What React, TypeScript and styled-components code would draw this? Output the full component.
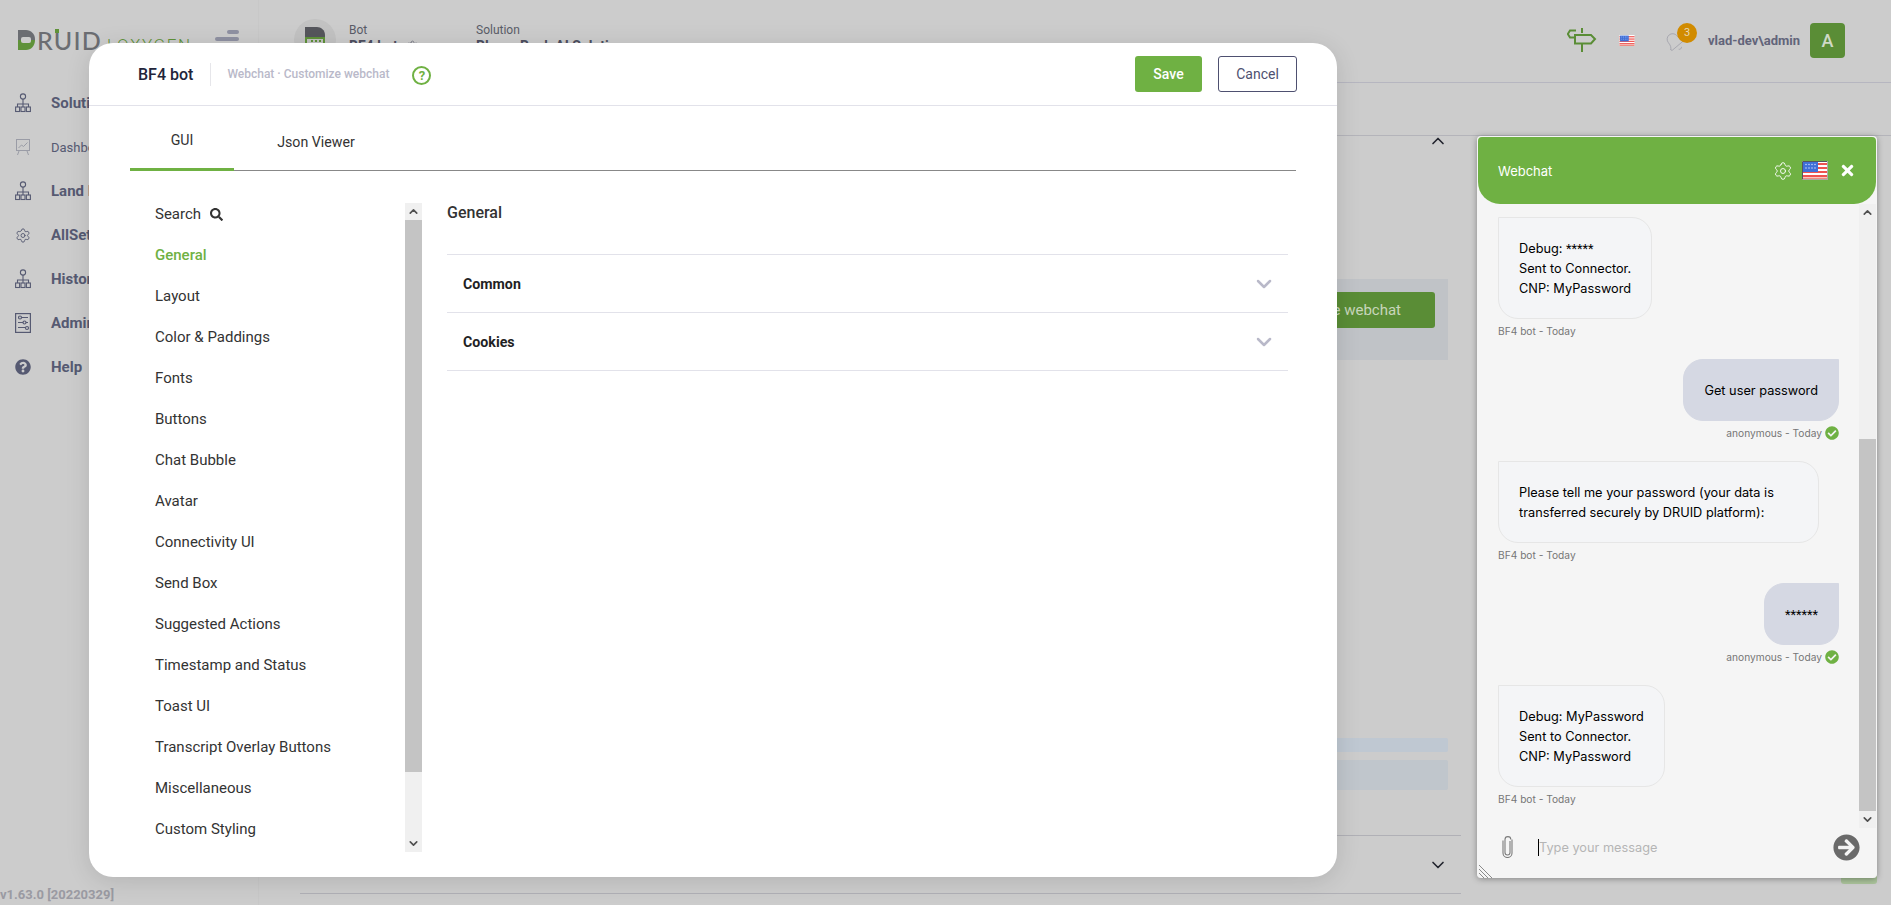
import React from "react";
import styled, { createGlobalStyle } from "styled-components";
import { ChevronDown, ChevronUp, Settings, Bell } from "lucide-react";
import { FaArrowCircleRight, FaCheckCircle, FaQuestionCircle, FaSearch, FaTimes } from "react-icons/fa";

const GlobalStyle = createGlobalStyle`
    html, body {
        margin: 0;
        padding: 0;
        background: #cccccc;
        font-family: Roboto, "Liberation Sans", sans-serif;
    }
`;

const Page = styled.div`
    position: relative;
    width: 1891px;
    height: 905px;
    overflow: hidden;
    display: flex;
    background: #cccccc;
`;

/* ---------- dimmed page behind the modal ---------- */

const Sidebar = styled.aside`
    width: 259px;
    height: 905px;
    flex-shrink: 0;
    display: flex;
    flex-direction: column;
    border-right: 1px solid #c8c8c8;
    box-sizing: border-box;
`;

const LogoRow = styled.div`
    height: 81px;
    flex-shrink: 0;
    display: flex;
    align-items: flex-start;
    padding: 30px 19px 0 18px;
    box-sizing: border-box;

    svg {
        flex-shrink: 0;
    }
`;

const LogoText = styled.span`
    position: relative;
    font-family: Lato, sans-serif;
    font-size: 25px;
    line-height: 20px;
    font-weight: 500;
    letter-spacing: 1.2px;
    margin-left: 1px;
    color: #6b6d72;

    &::before {
        content: "";
        position: absolute;
        left: 18px;
        top: -1px;
        width: 4px;
        height: 4px;
        background: #5f9239;
    }
`;

const LogoSub = styled.span`
    font-family: Roboto, sans-serif;
    font-size: 17px;
    line-height: 20px;
    font-weight: 300;
    letter-spacing: 1.6px;
    color: #5f9239;
    margin: 5px 0 0 5px;
`;

const Burger = styled.div`
    display: flex;
    flex-direction: column;
    align-items: flex-end;
    gap: 3px;
    width: 24px;
    margin-left: auto;

    span {
        display: block;
        height: 4px;
        background: #8f91a2;
        border-radius: 2px;
        width: 100%;
    }
    span:first-child {
        width: 12px;
    }
`;

const NavItem = styled.div`
    height: 44px;
    display: flex;
    align-items: center;
    gap: 20px;
    padding-left: 15px;
    color: #565a72;
    font-size: ${(p: { $sub?: boolean }) => (p.$sub ? "13px" : "15px")};
    font-weight: ${(p: { $sub?: boolean }) => (p.$sub ? 400 : 700)};
    white-space: nowrap;
`;

const NavIcon = styled.span`
    width: 16px;
    height: 20px;
    display: flex;
    align-items: center;
    justify-content: center;
`;

const Version = styled.div`
    margin-top: auto;
    height: 20px;
    line-height: 20px;
    font-size: 13px;
    font-weight: 700;
    color: #9a9aa2;
`;

const Main = styled.div`
    flex: 1;
    min-width: 0;
    display: flex;
    flex-direction: column;
`;

const Header = styled.header`
    height: 83px;
    flex-shrink: 0;
    box-sizing: border-box;
    border-bottom: 1px solid #b6b6c0;
    display: flex;
    align-items: flex-start;
`;

const BotAvatar = styled.div`
    width: 42px;
    height: 42px;
    border-radius: 50%;
    background: #c2c2c2;
    margin: 19px 13px 0 35px;
    display: flex;
    align-items: center;
    justify-content: center;
`;

const HeaderField = styled.div`
    width: ${(p: { $w: number }) => p.$w}px;
    padding-top: 23px;
    font-size: 12px;
    line-height: 14px;
    color: #5a5c68;

    b {
        display: flex;
        align-items: center;
        gap: 8px;
        font-size: 14px;
        line-height: 18px;
        color: #4d4f60;
    }
`;

const HeaderRight = styled.div`
    margin-left: auto;
    display: flex;
    align-items: center;
    height: 80px;
    padding-right: 46px;
`;

const FlagSlot = styled.span`
    display: flex;
    margin: ${(p: { $m: string }) => p.$m};
`;

const BellWrap = styled.div`
    position: relative;
    width: 24px;
    height: 24px;
    margin-left: 40px;
    color: #a8a8b0;

    svg {
        position: absolute;
        left: -11px;
        top: 3px;
        transform: rotate(-40deg);
    }
`;

const Badge = styled.span`
    position: absolute;
    top: -5px;
    left: 2px;
    width: 20px;
    height: 20px;
    border-radius: 50%;
    background: #d18b00;
    color: #e8d9b8;
    font-size: 11px;
    line-height: 20px;
    text-align: center;
`;

const UserName = styled.span`
    margin-left: 9px;
    font-size: 13px;
    font-weight: 700;
    color: #62647a;
`;

const UserBadge = styled.div`
    width: 35px;
    height: 35px;
    border-radius: 4px;
    margin-left: 10px;
    background: #5a8d36;
    color: #cfd9c6;
    font-size: 18px;
    font-weight: 500;
    line-height: 35px;
    text-align: center;
`;

const SubBar = styled.div`
    height: 53px;
    flex-shrink: 0;
    box-sizing: border-box;
    border-bottom: 1px solid #b4b4ba;
`;

const Content = styled.div`
    margin-left: 41px;
    width: 1161px;
    display: flex;
    flex-direction: column;
`;

const CollapseRow = styled.div`
    height: 10px;
    display: flex;
    justify-content: flex-end;
    padding-right: 13px;
    color: #22242e;

    svg {
        margin-top: -5px;
    }
`;

const InfoPanel = styled.div`
    margin: 133px 13px 0 0;
    height: 81px;
    box-sizing: border-box;
    padding: 13px;
    background: #c0c3c7;
    display: flex;
    justify-content: flex-end;
    align-items: flex-start;
`;

const DimButton = styled.div`
    height: 36px;
    padding: 0 34px;
    border-radius: 3px;
    background: #5a8d36;
    color: #c8d6bb;
    font-size: 15px;
    line-height: 36px;
    white-space: nowrap;
`;

const BlueBar = styled.div<{ $top: number; $h: number; $color: string }>`
    margin: ${(p) => p.$top}px 13px 0 0;
    height: ${(p) => p.$h}px;
    background: ${(p) => p.$color};
    border-radius: 2px;
`;

const FoldRow = styled.div`
    margin-top: 45px;
    height: 59px;
    box-sizing: border-box;
    border-top: 1px solid #b0b0b6;
    border-bottom: 1px solid #b0b0b6;
    display: flex;
    align-items: center;
    justify-content: flex-end;
    padding-right: 13px;
    color: #22242e;
`;

const FadedButton = styled.div`
    position: absolute;
    left: 1841px;
    top: 848px;
    width: 36px;
    height: 36px;
    border-radius: 3px;
    background: #a9c29a;
`;

/* ---------- modal ---------- */

const Modal = styled.div`
    position: absolute;
    left: 89px;
    top: 43px;
    width: 1248px;
    height: 834px;
    background: #ffffff;
    border-radius: 24px;
    box-shadow: 0 4px 24px rgba(0, 0, 0, 0.12);
    display: flex;
    flex-direction: column;
    color: #333333;
`;

const ModalHeader = styled.div`
    height: 63px;
    flex-shrink: 0;
    box-sizing: border-box;
    border-bottom: 1px solid #e2e2ea;
    display: flex;
    align-items: center;
    padding: 0 40px 0 48px;
`;

const ModalTitle = styled.div`
    font-size: 16px;
    font-weight: 500;
    color: #22243a;
    padding: 0 17px 0 1px;
    height: 23px;
    line-height: 23px;
    border-right: 1px solid #e6e6ea;
`;

const ModalCrumb = styled.div`
    font-size: 12px;
    font-weight: 500;
    color: #b9b9c9;
    margin-left: 16px;
`;

const HelpIcon = styled.span`
    margin: 2px 0 0 23px;
    width: 19px;
    height: 19px;
    border: 2px solid #6fb143;
    border-radius: 50%;
    box-sizing: border-box;
    color: #6fb143;
    font-size: 13px;
    font-weight: 700;
    line-height: 15px;
    text-align: center;
`;

const SaveButton = styled.button`
    margin-left: auto;
    width: 67px;
    height: 36px;
    border: 0;
    border-radius: 3px;
    background: #6fb143;
    color: #ffffff;
    font: 500 14px Roboto, sans-serif;
`;

const CancelButton = styled.button`
    margin-left: 16px;
    width: 79px;
    height: 36px;
    border: 1px solid #4e5070;
    border-radius: 3px;
    background: #ffffff;
    color: #4e5070;
    font: 400 14px Roboto, sans-serif;
`;

const Tabs = styled.div`
    margin: 0 41px;
    height: 65px;
    flex-shrink: 0;
    box-sizing: border-box;
    display: flex;
    border-bottom: 1px solid #888888;
`;

const Tab = styled.div<{ $active?: boolean; $w: number }>`
    width: ${(p) => p.$w}px;
    height: 65px;
    box-sizing: border-box;
    padding-top: ${(p) => (p.$active ? 24 : 26)}px;
    text-align: center;
    font-size: 14.2px;
    line-height: 20px;
    color: #333333;
    border-bottom: 3px solid ${(p) => (p.$active ? "#6fb143" : "transparent")};
`;

const ModalBody = styled.div`
    flex: 1;
    min-height: 0;
    display: flex;
    margin: 32px 49px 25px 41px;
`;

const ListColumn = styled.div`
    width: 275px;
    flex-shrink: 0;
    padding: 1px 0 0 25px;
    box-sizing: border-box;
    display: flex;
    flex-direction: column;
    gap: 21px;
`;

const ListItem = styled.div<{ $active?: boolean }>`
    display: flex;
    align-items: center;
    gap: 9px;
    height: 20px;
    font-size: 15px;
    font-weight: ${(p) => (p.$active ? 500 : 400)};
    color: ${(p) => (p.$active ? "#6fb143" : "#333333")};
    white-space: nowrap;
`;

const ScrollTrack = styled.div<{ $w: number }>`
    width: ${(p) => p.$w}px;
    flex-shrink: 0;
    background: #f0f0f0;
    display: flex;
    flex-direction: column;
`;

const ScrollArrow = styled.div`
    height: 17px;
    flex-shrink: 0;
    display: flex;
    align-items: center;
    justify-content: center;
    color: #505050;
`;

const ScrollThumb = styled.div<{ $h: number }>`
    height: ${(p) => p.$h}px;
    background: #c4c4c4;
`;

const ScrollGap = styled.div`
    flex: 1;
`;

const Panel = styled.div`
    flex: 1;
    margin-left: 25px;
`;

const PanelTitle = styled.div`
    height: 52px;
    box-sizing: border-box;
    font-size: 16px;
    font-weight: 500;
    line-height: 20px;
    color: #333333;
    border-bottom: 1px solid #e2e2ea;
`;

const AccordionRow = styled.div`
    height: 58px;
    box-sizing: border-box;
    border-bottom: 1px solid #e2e2ea;
    display: flex;
    align-items: center;
    justify-content: space-between;
    padding: 0 12px 0 16px;
    font-size: 14.2px;
    font-weight: 700;
    color: #1f1f24;

    svg {
        color: #b9b9c9;
    }
`;

/* ---------- webchat ---------- */

const Webchat = styled.div`
    position: absolute;
    left: 1477px;
    top: 136px;
    width: 400px;
    height: 742px;
    background: #f5f5f5;
    border: 1px solid #f5f5f5;
    border-bottom: 0;
    box-sizing: border-box;
    border-radius: 4px;
    box-shadow: 0 1px 6px rgba(0, 0, 0, 0.35);
    display: flex;
    flex-direction: column;
    font-family: Inter, "Liberation Sans", sans-serif;
`;

const ChatHeader = styled.div`
    height: 67px;
    flex-shrink: 0;
    background: #6fb143;
    border-radius: 4px 4px 22px 22px;
    display: flex;
    align-items: center;
    padding: 0 20px 0 20px;
    color: #ffffff;
    font-size: 13px;
`;

const ChatTitle = styled.span`
    margin-right: auto;
`;

const ChatBody = styled.div`
    flex: 1;
    min-height: 0;
    display: flex;
`;

const Messages = styled.div`
    flex: 1;
    overflow: hidden;
    box-sizing: border-box;
    padding: 13px 20px 0 20px;
    display: flex;
    flex-direction: column;
`;

const Message = styled.div<{ $user?: boolean }>`
    display: flex;
    flex-direction: column;
    align-items: ${(p) => (p.$user ? "flex-end" : "flex-start")};
    margin-bottom: 21px;
`;

const Bubble = styled.div<{ $user?: boolean }>`
    box-sizing: border-box;
    max-width: 321px;
    padding: 21px 20px 19px;
    border: 1px solid ${(p) => (p.$user ? "#d5d8e3" : "#e6e6e6")};
    border-radius: ${(p) => (p.$user ? "20px 0 20px 20px" : "0 20px 20px 20px")};
    background: ${(p) => (p.$user ? "#d5d8e3" : "#f4f5f7")};
    color: #000000;
    font-size: 12.75px;
    line-height: 20px;
`;

const Stars = styled.span`
    font-family: Roboto, sans-serif;
`;

const Meta = styled.div`
    margin-top: 5px;
    height: 14px;
    display: flex;
    align-items: center;
    gap: 3px;
    font-size: 10.2px;
    line-height: 14px;
    color: #767676;
`;

const InputRow = styled.div`
    height: 50px;
    flex-shrink: 0;
    box-sizing: border-box;
    display: flex;
    align-items: center;
    padding: 0 16px 12px 24px;
    position: relative;
    color: #7a7a7a;
`;

const Caret = styled.span`
    width: 1px;
    height: 17px;
    background: #000000;
    margin-left: 25px;
`;

const Placeholder = styled.span`
    flex: 1;
    font-size: 12.75px;
    color: #b5b5b5;
`;

const ResizeGrip = styled.svg`
    position: absolute;
    left: 1px;
    bottom: 0;
`;

const navIcon = {
    tree: (
        <svg width="16" height="20" viewBox="0 0 16 20" fill="none" stroke="#565a72" strokeWidth="1.1">
            <circle cx="8" cy="3.5" r="2.6" />
            <path d="M8 6v5M2.5 14v-3h11v3M8 11v3" />
            <rect x="0.6" y="14" width="4" height="4.5" />
            <rect x="6" y="14" width="4" height="4.5" />
            <rect x="11.4" y="14" width="4" height="4.5" />
        </svg>
    ),
    chart: (
        <svg width="16" height="18" viewBox="0 0 16 18" fill="none" stroke="#9a9ca6" strokeWidth="1">
            <rect x="1.5" y="1.5" width="13" height="11" />
            <path d="M3.5 10l3-3 2 1.5 4-4M4 13l-1.5 4M12 13l1.5 4" />
        </svg>
    ),
    gear: <Settings size={17} strokeWidth={1.4} color="#565a72" />,
    admin: (
        <svg width="16" height="20" viewBox="0 0 16 20" fill="none" stroke="#565a72" strokeWidth="1.2">
            <rect x="0.6" y="0.6" width="14.8" height="18.8" />
            <path d="M3 4.5h10M7 4.5M3 9.5h10M3 14.5h10" />
            <circle cx="5" cy="4.5" r="1.5" fill="#cccccc" />
            <circle cx="9.5" cy="9.5" r="1.5" fill="#cccccc" />
            <circle cx="12" cy="15" r="1.5" fill="#cccccc" />
        </svg>
    ),
    help: <FaQuestionCircle size={16} color="#565a72" />,
};

const UsFlag = ({ w, h, frame }: { w: number; h: number; frame?: boolean }) => (
    <svg width={w} height={h} viewBox="0 0 26 19">
        <rect width="26" height="19" fill="#ffffff" />
        {[2, 6, 10, 14].map((y) => (
            <rect key={y} y={y} width="26" height="2" fill="#ef5350" />
        ))}
        <rect y="16.5" width="26" height="2.5" fill="#f08a80" />
        <rect width="15" height="10" x="1" y="1" fill="#3f6fd8" />
        {[4, 7, 10, 13].map((x) =>
            [3.5, 7].map((y) => <circle key={`${x}-${y}`} cx={x} cy={y} r="0.7" fill="#dfe8ff" />)
        )}
        {frame && <path d="M0.5 18.5V0.5H25.5" fill="none" stroke="#55555f" strokeWidth="1" />}
        {frame && <path d="M25.5 0.5V18.5H0.5" fill="none" stroke="#a9aaa6" strokeWidth="1" />}
    </svg>
);

const menu = [
    "General",
    "Layout",
    "Color & Paddings",
    "Fonts",
    "Buttons",
    "Chat Bubble",
    "Avatar",
    "Connectivity UI",
    "Send Box",
    "Suggested Actions",
    "Timestamp and Status",
    "Toast UI",
    "Transcript Overlay Buttons",
    "Miscellaneous",
    "Custom Styling",
];

const App = () => {
    return (
        <Page>
            <GlobalStyle />

            <Sidebar>
                <LogoRow>
                    <svg width="18" height="20" viewBox="0 0 18 20">
                        <path d="M0 0h8c5 0 9 4 9 9v1H0z" fill="#6b6d72" />
                        <path d="M0 10h17c0 6-4 10-9 10H0z" fill="#5f9239" />
                        <rect x="3" y="7" width="10" height="6" rx="2" fill="#cccccc" />
                    </svg>
                    <LogoText>RUID</LogoText>
                    <LogoSub>LOXYGEN</LogoSub>
                    <Burger>
                        <span />
                        <span />
                    </Burger>
                </LogoRow>
                <NavItem><NavIcon>{navIcon.tree}</NavIcon>Solutions</NavItem>
                <NavItem $sub><NavIcon>{navIcon.chart}</NavIcon>Dashboard</NavItem>
                <NavItem><NavIcon>{navIcon.tree}</NavIcon>Land Registry</NavItem>
                <NavItem><NavIcon>{navIcon.gear}</NavIcon>AllSettings</NavItem>
                <NavItem><NavIcon>{navIcon.tree}</NavIcon>History</NavItem>
                <NavItem><NavIcon>{navIcon.admin}</NavIcon>Admin</NavItem>
                <NavItem><NavIcon>{navIcon.help}</NavIcon>Help</NavItem>
                <Version>v1.63.0 [20220329]</Version>
            </Sidebar>

            <Main>
                <Header>
                    <BotAvatar>
                        <svg width="22" height="26" viewBox="0 0 22 26">
                            <path d="M1 0h12c4 0 8 3 8 8v2H1z" fill="#55565c" />
                            <path d="M2 11h18v12H2z" fill="none" stroke="#5f9239" strokeWidth="2" />
                            <path d="M7 14h2M11 14h2M15 14h2" stroke="#5f9239" strokeWidth="2" />
                        </svg>
                    </BotAvatar>
                    <HeaderField $w={127}>
                        Bot
                        <b>
                            BF4 bot <Settings size={13} strokeWidth={1} />
                        </b>
                    </HeaderField>
                    <HeaderField $w={300}>
                        Solution<b>Bloom Bank AI Solution</b>
                    </HeaderField>
                    <HeaderRight>
                        <svg width="30" height="24" viewBox="0 0 30 24" fill="none" stroke="#5a8d36" strokeWidth="2">
                            <path d="M15 0v5M15 16v8M9 2.5H3L0.8 6 3 9.5h5" />
                            <path d="M8 7h16l4 4-4 4.5H8z" />
                        </svg>
                        <FlagSlot $m="0 0 0 22px">
                            <UsFlag w={16} h={11} />
                        </FlagSlot>
                        <BellWrap>
                            <Bell size={22} strokeWidth={1} />
                            <Badge>3</Badge>
                        </BellWrap>
                        <UserName>vlad-dev\admin</UserName>
                        <UserBadge>A</UserBadge>
                    </HeaderRight>
                </Header>
                <SubBar />
                <Content>
                    <CollapseRow>
                        <ChevronUp size={20} strokeWidth={2} />
                    </CollapseRow>
                    <InfoPanel>
                        <DimButton>Customize webchat</DimButton>
                    </InfoPanel>
                    <BlueBar $top={378} $h={14} $color="#bfc8d2" />
                    <BlueBar $top={8} $h={30} $color="#c0c6cc" />
                    <FoldRow>
                        <ChevronDown size={20} strokeWidth={2} />
                    </FoldRow>
                </Content>
            </Main>

            <FadedButton />

            <Modal>
                <ModalHeader>
                    <ModalTitle>BF4 bot</ModalTitle>
                    <ModalCrumb>Webchat · Customize webchat</ModalCrumb>
                    <HelpIcon>?</HelpIcon>
                    <SaveButton>Save</SaveButton>
                    <CancelButton>Cancel</CancelButton>
                </ModalHeader>
                <Tabs>
                    <Tab $active $w={104}>GUI</Tab>
                    <Tab $w={164}>Json Viewer</Tab>
                </Tabs>
                <ModalBody>
                    <ListColumn>
                        <ListItem>
                            Search <FaSearch size={13} color="#333333" />
                        </ListItem>
                        {menu.map((item) => (
                            <ListItem key={item} $active={item === "General"}>
                                {item}
                            </ListItem>
                        ))}
                    </ListColumn>
                    <ScrollTrack $w={17}>
                        <ScrollArrow><ChevronUp size={13} strokeWidth={3} /></ScrollArrow>
                        <ScrollThumb $h={552} />
                        <ScrollGap />
                        <ScrollArrow><ChevronDown size={13} strokeWidth={3} /></ScrollArrow>
                    </ScrollTrack>
                    <Panel>
                        <PanelTitle>General</PanelTitle>
                        <AccordionRow>
                            Common
                            <ChevronDown size={24} strokeWidth={2.5} />
                        </AccordionRow>
                        <AccordionRow>
                            Cookies
                            <ChevronDown size={24} strokeWidth={2.5} />
                        </AccordionRow>
                    </Panel>
                </ModalBody>
            </Modal>

            <Webchat>
                <ChatHeader>
                    <ChatTitle>Webchat</ChatTitle>
                    <Settings size={20} strokeWidth={1.1} />
                    <FlagSlot $m="0 11px 0 9px">
                        <UsFlag w={26} h={19} frame />
                    </FlagSlot>
                    <FaTimes size={17} />
                </ChatHeader>
                <ChatBody>
                    <Messages>
                        <Message>
                            <Bubble>
                                Debug: <Stars>*****</Stars>
                                <br />
                                Sent to Connector.
                                <br />
                                CNP: MyPassword
                            </Bubble>
                            <Meta>BF4 bot - Today</Meta>
                        </Message>
                        <Message $user>
                            <Bubble $user>Get user password</Bubble>
                            <Meta>
                                anonymous - Today <FaCheckCircle size={14} color="#6fb143" />
                            </Meta>
                        </Message>
                        <Message>
                            <Bubble>
                                Please tell me your password (your data is transferred securely by DRUID platform):
                            </Bubble>
                            <Meta>BF4 bot - Today</Meta>
                        </Message>
                        <Message $user>
                            <Bubble $user><Stars>******</Stars></Bubble>
                            <Meta>
                                anonymous - Today <FaCheckCircle size={14} color="#6fb143" />
                            </Meta>
                        </Message>
                        <Message>
                            <Bubble>
                                Debug: MyPassword
                                <br />
                                Sent to Connector.
                                <br />
                                CNP: MyPassword
                            </Bubble>
                            <Meta>BF4 bot - Today</Meta>
                        </Message>
                    </Messages>
                    <ScrollTrack $w={17}>
                        <ScrollArrow><ChevronUp size={13} strokeWidth={3} /></ScrollArrow>
                        <ScrollGap />
                        <ScrollThumb $h={372} />
                        <ScrollArrow><ChevronDown size={13} strokeWidth={3} /></ScrollArrow>
                    </ScrollTrack>
                </ChatBody>
                <InputRow>
                    <svg width="11" height="22" viewBox="0 0 11 22" fill="none" stroke="currentColor" strokeWidth="1.1">
                        <path d="M8 5v11.5a2.5 2.5 0 0 1-5 0V3.5a2.9 2.9 0 0 1 5.8 0M3 3.5" />
                        <path d="M1 4.5v12.5a4.5 4.5 0 0 0 9 0V3.5" />
                    </svg>
                    <Caret />
                    <Placeholder>Type your message</Placeholder>
                    <FaArrowCircleRight size={27} color="#6a6a6a" />
                    <ResizeGrip width="15" height="15" viewBox="0 0 15 15" stroke="#8a8a8a" strokeWidth="1">
                        <path d="M0 2l13 13M0 6l9 9M0 10l5 5" />
                    </ResizeGrip>
                </InputRow>
            </Webchat>
        </Page>
    );
};

export default App;
